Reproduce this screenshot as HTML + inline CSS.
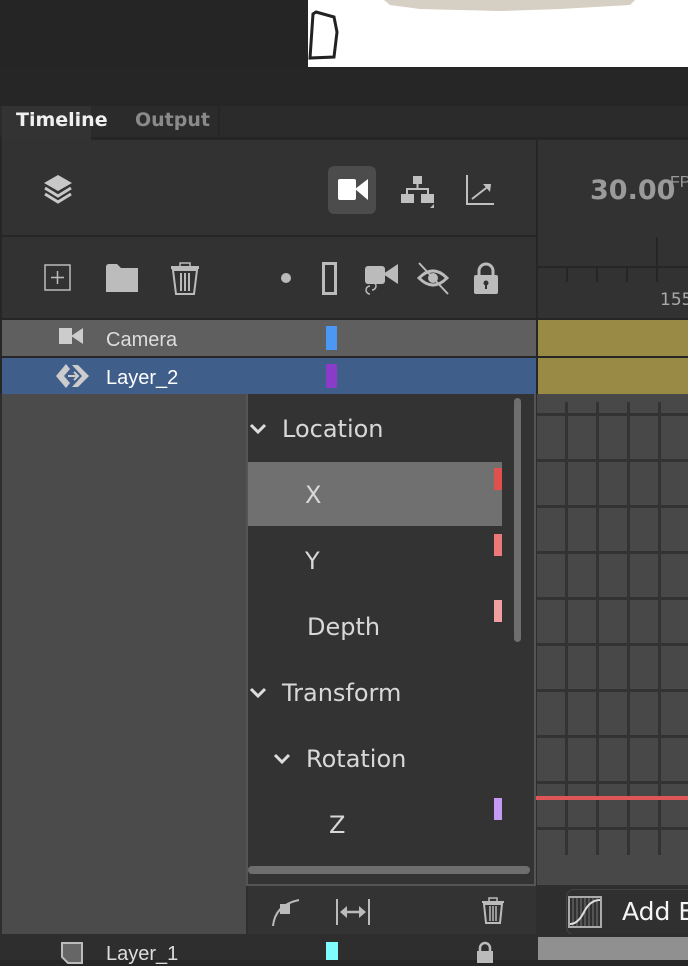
<!DOCTYPE html>
<html><head><meta charset="utf-8"><style>
*{margin:0;padding:0;box-sizing:border-box}
body{width:688px;height:960px;background:#262626;position:relative;overflow:hidden;font-family:"DejaVu Sans","Liberation Sans",sans-serif}
.a{position:absolute}
.t{position:absolute;white-space:nowrap;color:#d8d8d8}
.l{font-family:"Liberation Sans",sans-serif}
svg{position:absolute;overflow:visible}
</style></head><body>
<!-- top canvas -->
<div class="a" style="left:0;top:0;width:688px;height:68px;background:#252525"></div>
<div class="a" style="left:308px;top:0;width:380px;height:67px;background:#fff"></div>
<svg style="left:300px;top:0" width="400" height="70"><path d="M84 0 L335 0 L330 5 L260 9 L200 11 L120 9 L90 5Z" fill="#d6cfc3"/><path d="M16 12 L34 17 L37 32 L34 57 L10 58 L13 14Z" fill="#fff" stroke="#222" stroke-width="3"/></svg>
<div class="a" style="left:0;top:68px;width:688px;height:38px;background:#262626"></div>
<!-- tab bar -->
<div class="a" style="left:0;top:106px;width:688px;height:33px;background:#2b2b2b;border-bottom:2px solid #252525"></div>
<div class="a" style="left:2px;top:106px;width:89px;height:34px;background:#333"></div>
<div class="a" style="left:92px;top:106px;width:128px;height:32px;border-right:2px solid #262626"></div>
<div class="t" style="left:16px;top:109px;font-size:19px;font-weight:bold;color:#f0f0f0">Timeline</div>
<div class="t" style="left:135px;top:109px;font-size:19px;font-weight:bold;color:#8a8a8a">Output</div>
<!-- header panel -->
<div class="a" style="left:2px;top:140px;width:686px;height:180px;background:#323232"></div>
<div class="a" style="left:536px;top:140px;width:2px;height:180px;background:#262626"></div>
<div class="a" style="left:2px;top:235px;width:534px;height:2px;background:#262626"></div>
<div class="a" style="left:538px;top:266px;width:150px;height:2px;background:#262626"></div>
<div class="a" style="left:656px;top:237px;width:2px;height:29px;background:#262626"></div>
<div class="a" style="left:566px;top:266px;width:2px;height:16px;background:#262626"></div>
<div class="a" style="left:596px;top:266px;width:2px;height:16px;background:#262626"></div>
<div class="a" style="left:626px;top:266px;width:2px;height:16px;background:#262626"></div>
<div class="a" style="left:656px;top:266px;width:2px;height:16px;background:#262626"></div>
<div class="a" style="left:0;top:318px;width:688px;height:2px;background:#262626"></div>
<!-- layers icon -->
<svg style="left:42px;top:173px" width="32" height="34"><path d="M16 2 L30 10 L16 18 L2 10Z" fill="#c8c8c8"/><path d="M3 15 L16 23 L29 15" fill="none" stroke="#c8c8c8" stroke-width="3"/><path d="M3 21 L16 29 L29 21" fill="none" stroke="#c8c8c8" stroke-width="3"/></svg>
<div class="a" style="left:328px;top:166px;width:48px;height:48px;background:#4c4c4c;border-radius:6px"></div>
<svg style="left:338px;top:179px" width="30" height="24"><rect x="0" y="0" width="18" height="21" rx="2" fill="#fff"/><path d="M17 10 L30 0 L30 21Z" fill="#fff"/></svg>
<svg style="left:401px;top:176px" width="34" height="34"><rect x="12" y="0" width="9" height="8" fill="#c0c0c0"/><rect x="15.5" y="8" width="2" height="5" fill="#c0c0c0"/><rect x="5" y="12" width="23" height="2" fill="#c0c0c0"/><rect x="5" y="12" width="2" height="6" fill="#c0c0c0"/><rect x="26" y="12" width="2" height="6" fill="#c0c0c0"/><rect x="0" y="18" width="13" height="9" fill="#c0c0c0"/><rect x="20" y="18" width="13" height="9" fill="#c0c0c0"/><path d="M29 32 L33 28 L33 32Z" fill="#c0c0c0"/></svg>
<svg style="left:466px;top:175px" width="30" height="32"><path d="M1 0 V29 H28" fill="none" stroke="#c0c0c0" stroke-width="2"/><path d="M6 24 L24 10" stroke="#c0c0c0" stroke-width="2"/><path d="M17 9 L25 9 L24 17Z" fill="#c0c0c0"/></svg>
<div class="t" style="left:590px;top:175px;font-size:27px;font-weight:bold;color:#9a9a9a">30.00</div>
<div class="t l" style="left:670px;top:174px;font-size:16px;color:#9a9a9a">FPS</div>
<!-- row 2 icons -->
<svg style="left:44px;top:264px" width="28" height="28"><rect x="1" y="1" width="25" height="25" fill="none" stroke="#bbb" stroke-width="1.5"/><path d="M13.5 7 V20 M7 13.5 H20" stroke="#bbb" stroke-width="1.5"/></svg>
<svg style="left:106px;top:264px" width="34" height="28"><path d="M0 3 Q0 0 3 0 H11 L15 4 H32 V28 H0Z" fill="#bcbcbc"/></svg>
<svg style="left:170px;top:262px" width="30" height="34"><rect x="1" y="4" width="28" height="3" fill="#bbb"/><rect x="10" y="1" width="10" height="4" fill="none" stroke="#bbb" stroke-width="1.5"/><path d="M3 8 L6 32 H24 L27 8Z" fill="none" stroke="#bbb" stroke-width="2"/><path d="M11 11 V29 M15 11 V29 M19 11 V29" stroke="#bbb" stroke-width="2"/></svg>
<div class="a" style="left:281px;top:273px;width:10px;height:10px;border-radius:50%;background:#bbb"></div>
<div class="a" style="left:322px;top:262px;width:15px;height:33px;border:3px solid #bbb"></div>
<svg style="left:363px;top:262px" width="38" height="36"><rect x="2" y="4" width="20" height="18" rx="3" fill="#bbb"/><path d="M20 12 L35 2 V22Z" fill="#bbb"/><path d="M7 24 a3 3 0 1 0 0 8 M9 20 a3 3 0 1 1 0 8" fill="none" stroke="#bbb" stroke-width="1.5"/></svg>
<svg style="left:417px;top:262px" width="34" height="34"><path d="M2 16 Q16 2 30 16 Q16 30 2 16Z" fill="none" stroke="#bbb" stroke-width="3"/><circle cx="16" cy="16" r="5" fill="#bbb"/><path d="M2 1 L31 32" stroke="#bbb" stroke-width="2"/></svg>
<svg style="left:473px;top:262px" width="26" height="34"><path d="M6 14 V9 a7 7 0 0 1 14 0 V14" fill="none" stroke="#bbb" stroke-width="3"/><rect x="1" y="13" width="24" height="19" rx="2" fill="#bbb"/><circle cx="13" cy="21" r="2.5" fill="#333"/><rect x="12" y="21" width="2" height="6" fill="#333"/></svg>
<div class="t" style="left:660px;top:290px;font-size:17px;color:#aaa">155</div>
<!-- layer rows -->
<div class="a" style="left:2px;top:320px;width:534px;height:36px;background:#5f5f5f"></div>
<div class="a" style="left:538px;top:320px;width:150px;height:36px;background:#998a45"></div>
<div class="a" style="left:0;top:356px;width:688px;height:2px;background:#262626"></div>
<div class="a" style="left:2px;top:358px;width:534px;height:36px;background:#3f5e89"></div>
<div class="a" style="left:538px;top:358px;width:150px;height:36px;background:#998a45"></div>
<svg style="left:59px;top:328px" width="26" height="20"><rect x="0" y="0" width="13" height="16" fill="#ccc"/><path d="M12 8 L24 0 V16Z" fill="#ccc"/></svg>
<svg style="left:56px;top:364px" width="34" height="24"><path d="M10 0 L0 12 L10 24 L14 19 L8 12 L14 5Z" fill="#ccc"/><path d="M16 1 H22 L33 12 L22 23 H16 L26 12Z" fill="#ccc"/><path d="M12 12 H22 M18 8 L22 12 L18 16" stroke="#ccc" stroke-width="2" fill="none"/></svg>
<div class="t l" style="left:106px;top:329px;font-size:20px;color:#ddd">Camera</div>
<div class="t l" style="left:106px;top:367px;font-size:20px;color:#fff">Layer_2</div>
<div class="a" style="left:326px;top:326px;width:11px;height:24px;background:#4a98f4"></div>
<div class="a" style="left:326px;top:364px;width:11px;height:24px;background:#8a3cc8"></div>
<!-- lower area -->
<div class="a" style="left:0;top:394px;width:688px;height:566px;background:#2e2e2e"></div>
<div class="a" style="left:2px;top:394px;width:244px;height:540px;background:#4b4b4b"></div>
<!-- grid -->
<div class="a" style="left:537px;top:394px;width:151px;height:490px;background:#484848;
background-image:repeating-linear-gradient(90deg,transparent 0 28px,#333 28px 31px),repeating-linear-gradient(180deg,transparent 0 19px,#333 19px 22px,transparent 22px 46px)"></div>
<div class="a" style="left:537px;top:394px;width:151px;height:8px;background:#484848"></div>
<div class="a" style="left:537px;top:855px;width:151px;height:30px;background:#484848"></div>
<div class="a" style="left:536px;top:796px;width:152px;height:4px;background:#e05555"></div>
<!-- popup -->
<div class="a" style="left:246px;top:394px;width:290px;height:492px;background:#333;border:2px solid #555;border-top:none"></div>
<div class="a" style="left:248px;top:462px;width:254px;height:64px;background:#707070"></div>
<div class="a" style="left:514px;top:398px;width:7px;height:244px;border-radius:4px;background:#6e6e6e"></div>
<div class="a" style="left:248px;top:866px;width:282px;height:8px;border-radius:4px;background:#6e6e6e"></div>
<svg style="left:249px;top:423px" width="18" height="12"><path d="M2 2 L9 9 L16 2" fill="none" stroke="#ddd" stroke-width="3"/></svg>
<svg style="left:249px;top:687px" width="18" height="12"><path d="M2 2 L9 9 L16 2" fill="none" stroke="#ddd" stroke-width="3"/></svg>
<svg style="left:273px;top:753px" width="18" height="12"><path d="M2 2 L9 9 L16 2" fill="none" stroke="#ddd" stroke-width="3"/></svg>
<div class="t" style="left:282px;top:415px;font-size:24px">Location</div>
<div class="t" style="left:305px;top:481px;font-size:24px">X</div>
<div class="t" style="left:305px;top:547px;font-size:24px">Y</div>
<div class="t" style="left:307px;top:613px;font-size:24px">Depth</div>
<div class="t" style="left:282px;top:679px;font-size:24px">Transform</div>
<div class="t" style="left:306px;top:745px;font-size:24px">Rotation</div>
<div class="t" style="left:329px;top:811px;font-size:24px">Z</div>
<div class="a" style="left:494px;top:468px;width:8px;height:22px;background:#e0504c"></div>
<div class="a" style="left:494px;top:534px;width:8px;height:22px;background:#ec7878"></div>
<div class="a" style="left:494px;top:600px;width:8px;height:22px;background:#f0a0a0"></div>
<div class="a" style="left:494px;top:798px;width:8px;height:22px;background:#c49af5"></div>
<!-- bottom toolbar -->
<div class="a" style="left:248px;top:886px;width:288px;height:48px;background:#333"></div>
<svg style="left:271px;top:897px" width="34" height="30"><path d="M2 29 Q4 8 28 3" fill="none" stroke="#bbb" stroke-width="2"/><rect x="9" y="7" width="10" height="10" fill="#bbb"/></svg>
<svg style="left:335px;top:897px" width="36" height="30"><path d="M2 2 V28 M34 2 V28" stroke="#bbb" stroke-width="2"/><path d="M8 15 H28" stroke="#bbb" stroke-width="2.5"/><path d="M5 15 L12 9 V21Z M31 15 L24 9 V21Z" fill="#bbb"/></svg>
<svg style="left:481px;top:897px" width="24" height="28"><rect x="1" y="4" width="22" height="2" fill="#bbb"/><rect x="8" y="1" width="8" height="4" fill="none" stroke="#bbb" stroke-width="1.5"/><path d="M3 7 L5 26 H19 L21 7Z" fill="none" stroke="#bbb" stroke-width="2"/><path d="M9 9 V24 M12 9 V24 M15 9 V24" stroke="#bbb" stroke-width="1.5"/></svg>
<div class="a" style="left:566px;top:889px;width:140px;height:46px;border:1.5px solid #444;border-radius:8px;background:#303030"></div>
<svg style="left:568px;top:896px" width="34" height="32"><rect x="1" y="1" width="32" height="30" fill="none" stroke="#aaa" stroke-width="2"/><path d="M5 2 V30 M9 2 V30 M13 2 V30 M17 2 V30 M21 2 V30 M25 2 V30 M29 2 V30" stroke="#777" stroke-width="1"/><path d="M2 28 Q10 28 16 16 Q22 4 32 4" fill="none" stroke="#ddd" stroke-width="2"/></svg>
<div class="t" style="left:622px;top:897px;font-size:25px;color:#f4f4f4">Add E</div>
<!-- bottom row -->
<div class="a" style="left:0;top:934px;width:688px;height:26px;background:#2e2e2e"></div>
<div class="a" style="left:538px;top:937px;width:150px;height:23px;background:#909090"></div>
<svg style="left:60px;top:941px" width="24" height="22"><path d="M2 2 H22 V22 H8 L2 16Z" fill="#666" stroke="#bbb" stroke-width="2"/></svg>
<div class="t l" style="left:106px;top:943px;font-size:20px;color:#ddd">Layer_1</div>
<div class="a" style="left:326px;top:942px;width:12px;height:18px;background:#7ffcff"></div>
<svg style="left:476px;top:942px" width="18" height="20"><path d="M4 10 V6 a5 5 0 0 1 10 0 V10" fill="none" stroke="#bbb" stroke-width="2.5"/><rect x="1" y="9" width="16" height="12" fill="#bbb"/></svg>
</body></html>
